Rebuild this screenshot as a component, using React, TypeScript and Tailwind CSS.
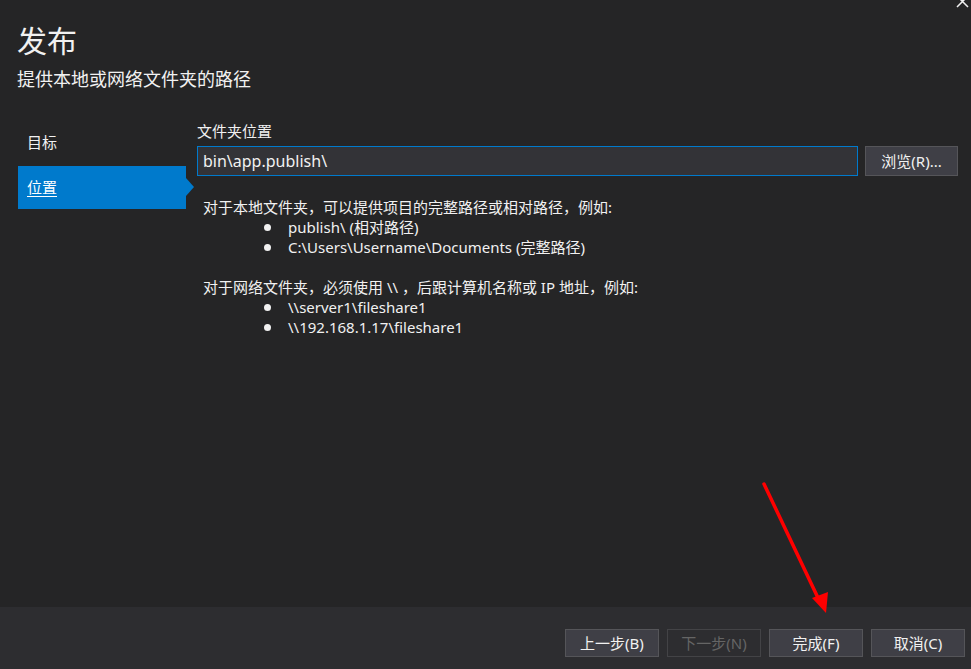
import React from "react";

const font = { fontFamily: '"Segoe UI", "Noto Sans", "Noto Sans CJK SC", sans-serif' };

function Bullet({ children }: { children: React.ReactNode }) {
  return (
    <div className="flex items-center pl-[61px]">
      <span className="w-[24px] flex items-center">
        <span className="block w-[7px] h-[7px] rounded-full bg-[#f1f1f1]" />
      </span>
      <span>{children}</span>
    </div>
  );
}

export default function App() {
  return (
    <div
      className="relative w-[971px] h-[669px] bg-[#252526] text-[#f1f1f1] overflow-hidden flex flex-col"
      style={font}
    >
      {/* close X */}
      <svg className="absolute right-[0px] top-[-6px]" width="16" height="16" viewBox="0 0 16 16">
        <path d="M2 2 L13 13 M13 2 L2 13" stroke="#f1f1f1" strokeWidth="1.5" />
      </svg>

      <div className="flex-1 flex flex-col">
        <div className="pl-[17px] pt-[22px]">
          <div className="text-[30px] leading-[38px] text-[#f1f1f1]">发布</div>
          <div className="text-[18px] leading-[24px] mt-[7px] text-[#f1f1f1]">提供本地或网络文件夹的路径</div>
        </div>

        <div className="flex mt-[30px]">
          {/* left nav */}
          <div className="w-[186px] pl-[18px] pt-[7px] flex flex-col">
            <div className="h-[28px] pl-[9px] flex items-center text-[15px] text-[#f1f1f1]">目标</div>
            <div className="relative mt-[10px] h-[43px] bg-[#007acc] pl-[9px] flex items-center text-[15px] text-white">
              <span className="underline underline-offset-[3px]">位置</span>
              <div className="absolute right-[-8px] top-[12px] w-0 h-0 border-y-[9px] border-y-transparent border-l-[8px] border-l-[#007acc]" />
            </div>
          </div>

          {/* right content */}
          <div className="flex-1 pl-[11px] pr-[13px]">
            <div className="text-[15px] leading-[20px] text-[#f1f1f1]">文件夹位置</div>
            <div className="flex gap-[7px] mt-[5px]">
              <div className="flex-1 h-[30px] border border-[#007acc] bg-[#333337] flex items-center pl-[5px] text-[16px] text-[#f1f1f1]">
                bin\app.publish\
              </div>
              <div className="w-[93px] h-[30px] border border-[#555559] bg-[#3f3f46] flex items-center justify-center text-[15px] text-[#f1f1f1]">
                浏览(R)...
              </div>
            </div>

            <div className="mt-[21px] pl-[6px] text-[15px] leading-[20px] text-[#f1f1f1]">
              <div>对于本地文件夹，可以提供项目的完整路径或相对路径，例如:</div>
              <Bullet>publish\ (相对路径)</Bullet>
              <Bullet>C:\Users\Username\Documents (完整路径)</Bullet>
              <div className="h-[20px]" />
              <div>对于网络文件夹，必须使用 \\ ，后跟计算机名称或 IP 地址，例如:</div>
              <Bullet>\\server1\fileshare1</Bullet>
              <Bullet>\\192.168.1.17\fileshare1</Bullet>
            </div>
          </div>
        </div>
      </div>

      {/* footer */}
      <div className="h-[62px] bg-[#2d2d30] flex items-start justify-end pr-[6px] pt-[22px] gap-[8px]">
        <div className="w-[94px] h-[28px] border border-[#555559] bg-[#3f3f46] flex items-center justify-center text-[15px] text-[#f1f1f1]">上一步(B)</div>
        <div className="w-[94px] h-[28px] border border-[#434346] bg-[#2d2d30] flex items-center justify-center text-[15px] text-[#656565]">下一步(N)</div>
        <div className="w-[94px] h-[28px] border border-[#555559] bg-[#3f3f46] flex items-center justify-center text-[15px] text-[#f1f1f1]">完成(F)</div>
        <div className="w-[94px] h-[28px] border border-[#555559] bg-[#3f3f46] flex items-center justify-center text-[15px] text-[#f1f1f1]">取消(C)</div>
      </div>

      {/* red annotation arrow */}
      <svg className="absolute left-0 top-0 pointer-events-none" width="971" height="669" viewBox="0 0 971 669">
        <line x1="764" y1="484" x2="819" y2="600" stroke="#ff0000" strokeWidth="3.5" strokeLinecap="round" />
        <polygon points="826,613 812,598 828,592" fill="#ff0000" />
      </svg>
    </div>
  );
}
